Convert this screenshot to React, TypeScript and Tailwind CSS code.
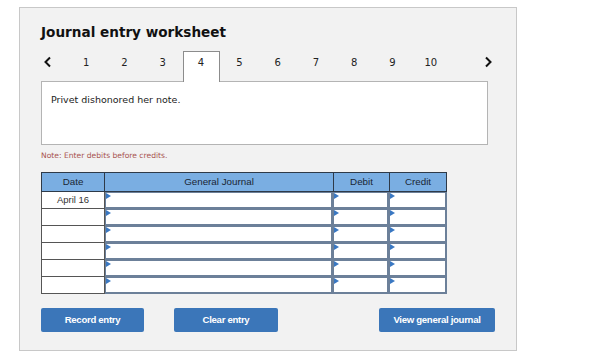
import React from "react";

const verdana = { fontFamily: '"DejaVu Sans", Verdana, sans-serif' };
const arial = { fontFamily: '"Liberation Sans", Arial, sans-serif' };

function Tri() {
  return (
    <svg className="absolute left-0 top-0" width="5" height="6" viewBox="0 0 5 6">
      <polygon points="0,0 5,3 0,6" fill="#3a78c2" />
    </svg>
  );
}

function InputCell({ w }: { w: string }) {
  return (
    <div className={`relative h-full bg-white border-l border-t border-r-2 border-b-2 border-[#6c8099] ${w}`}>
      <Tri />
    </div>
  );
}

export default function App() {
  const tabs = ["1", "2", "3", "4", "5", "6", "7", "8", "9", "10"];
  const rows = ["April 16", "", "", "", "", ""];
  return (
    <div className="w-[612px] h-[360px] bg-white pt-[7px] pl-[19px]">
      <div className="w-[498px] h-[344px] border border-[#c8c8c8] bg-[#f2f2f2] pl-[21px]">
        <div className="mt-[14px] h-[20px] text-[13.6px] font-bold text-[#111] leading-[20px]" style={verdana}>
          Journal entry worksheet
        </div>
        <div className="mt-[9px] flex h-[30px] items-stretch w-[447px]" style={verdana}>
          <div className="w-[26px] flex items-center pb-[8px]">
            <svg width="10" height="12" viewBox="0 0 10 12" className="ml-[2px]">
              <polyline points="7,1.5 2.5,6 7,10.5" fill="none" stroke="#111" strokeWidth="2" />
            </svg>
          </div>
          {tabs.map((t) => (
            <div key={t} className="w-[38.3px] flex justify-center">
              {t === "4" ? (
                <div className="relative z-10 w-[37px] h-[31px] bg-white border border-b-0 border-[#8c8c8c] flex items-center justify-center text-[10px] text-[#222] pb-[9px]">
                  {t}
                </div>
              ) : (
                <div className="flex items-center justify-center text-[10px] text-[#222] pb-[8px]">{t}</div>
              )}
            </div>
          ))}
          <div className="flex-1 flex items-center justify-end pb-[8px]">
            <svg width="10" height="12" viewBox="0 0 10 12" className="-mr-[5px]">
              <polyline points="3,1.5 7.5,6 3,10.5" fill="none" stroke="#111" strokeWidth="2" />
            </svg>
          </div>
        </div>
        <div className="w-[447px] h-[64px] bg-white border border-[#b4b4b4] pl-[9px] pt-[11px] text-[9.5px] text-[#222]" style={verdana}>
          Privet dishonored her note.
        </div>
        <div className="mt-[5px] text-[7.6px] text-[#a85450] leading-[12px]" style={verdana}>
          Note: Enter debits before credits.
        </div>
        <div className="mt-[10px] w-[406px]" style={arial}>
          <div className="flex h-[20px] bg-[#7aaee2] border border-[#2e3a48] text-[9.8px] text-[#1b2633]">
            <div className="w-[63px] flex items-center justify-center border-r border-[#2e3a48]">Date</div>
            <div className="w-[229px] flex items-center justify-center border-r border-[#2e3a48]">General Journal</div>
            <div className="w-[56px] flex items-center justify-center border-r border-[#2e3a48]">Debit</div>
            <div className="flex-1 flex items-center justify-center">Credit</div>
          </div>
          {rows.map((r, i) => (
            <div key={i} className="flex h-[17px]">
              <div className="w-[64px] h-full bg-white border-l border-r border-b border-[#555] flex items-center justify-center text-[9.5px] text-[#333]">
                {r}
              </div>
              <InputCell w="w-[228px]" />
              <InputCell w="w-[56px]" />
              <InputCell w="w-[58px]" />
            </div>
          ))}
        </div>
        <div className="mt-[14px] flex h-[24px] text-[9.6px] font-bold text-white tracking-[-0.3px]" style={arial}>
          <div className="w-[103px] bg-[#3b76b9] rounded-[2px] flex items-center justify-center">Record entry</div>
          <div className="ml-[30px] w-[104px] bg-[#3b76b9] rounded-[2px] flex items-center justify-center">Clear entry</div>
          <div className="ml-[101px] w-[116px] bg-[#3b76b9] rounded-[2px] flex items-center justify-center">View general journal</div>
        </div>
      </div>
    </div>
  );
}
